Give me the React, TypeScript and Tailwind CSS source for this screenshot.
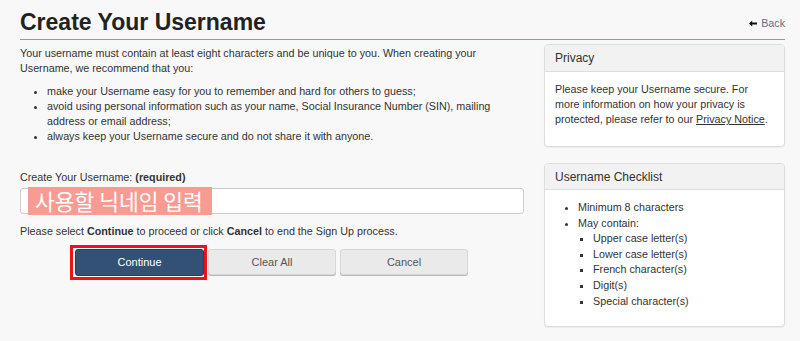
import React from "react";

export default function App() {
  return (
    <div
      className="w-[800px] h-[341px] bg-[#f8f8f8] text-[#333] overflow-hidden"
      style={{ fontFamily: '"Liberation Sans", Arial, sans-serif' }}
    >
      <div className="pl-[20px] pr-[15px]">
        <div className="flex items-end justify-between border-b border-[#c2898c]">
          <h1 className="mt-[9px] pb-[4px] text-[23px] leading-[26px] font-bold text-[#222]">
            Create Your Username
          </h1>
          <a className="flex items-center gap-[4px] mb-[9px] text-[10.7px] leading-[14px] text-[#5d7087]">
            <svg width="8" height="7" viewBox="0 0 9 7">
              <path d="M0 3.5 L3.6 0 L3.6 2.4 L9 2.4 L9 4.6 L3.6 4.6 L3.6 7 Z" fill="#111" />
            </svg>
            Back
          </a>
        </div>

        <div className="flex gap-[20px] mt-[5px]">
          <div className="w-[504px] text-[10.75px] leading-[15px]">
            <p className="pt-[1px]">
              Your username must contain at least eight characters and be unique to you. When creating your
              Username, we recommend that you:
            </p>
            <ul className="list-disc pl-[27px] mt-[8px]">
              <li>make your Username easy for you to remember and hard for others to guess;</li>
              <li>
                avoid using personal information such as your name, Social Insurance Number (SIN), mailing
                address or email address;
              </li>
              <li>always keep your Username secure and do not share it with anyone.</li>
            </ul>

            <div className="mt-[26px]">
              Create Your Username: <b>(required)</b>
            </div>
            <div className="relative mt-[3px]">
              <div className="h-[26px] w-full bg-white border border-[#ccc] rounded-[3px]" />
              <div
                className="absolute left-[8px] top-[-1px] w-[184px] h-[28px] bg-[#f89c93] text-white text-[21.5px] leading-[28px] pl-[7px]"
                style={{ fontFamily: '"Noto Sans CJK KR", "Noto Sans", sans-serif' }}
              >
                사용할 닉네임 입력
              </div>
            </div>

            <p className="mt-[10px]">
              Please select <b>Continue</b> to proceed or click <b>Cancel</b> to end the Sign Up process.
            </p>

            <div className="flex gap-[4px] ml-[55px] mt-[10px]">
              <div className="relative">
                <button className="w-[129px] h-[27px] bg-[#335075] text-white text-[11px] rounded-[3px] border border-[#24405f]">
                  Continue
                </button>
                <span className="absolute left-[-5px] top-[-4px] w-[137px] h-[35px] border-[3px] border-[#e8141c]" />
              </div>
              <button className="w-[128px] h-[26px] bg-[#eaeaea] text-[#555] text-[11px] rounded-[3px] border border-[#d6d6d6] shadow-[0_1px_0_#b8b8b8]">
                Clear All
              </button>
              <button className="w-[128px] h-[26px] bg-[#eaeaea] text-[#555] text-[11px] rounded-[3px] border border-[#d6d6d6] shadow-[0_1px_0_#b8b8b8]">
                Cancel
              </button>
            </div>
          </div>

          <div className="w-[241px] flex flex-col gap-[16px] -mt-[1px]">
            <div className="bg-white border border-[#ddd] rounded-[4px] shadow-[0_1px_1px_rgba(0,0,0,0.05)]">
              <div className="h-[27px] bg-[#f2f2f2] border-b border-[#ddd] rounded-t-[4px] px-[10px] text-[12px] leading-[27px]">
                Privacy
              </div>
              <div className="pl-[10px] pr-[14px] pt-[10px] pb-[19px] text-[10.75px] leading-[15px]">
                Please keep your Username secure. For more information on how your privacy is protected,
                please refer to our <a className="underline">Privacy Notice</a>.
              </div>
            </div>

            <div className="bg-white border border-[#ddd] rounded-[4px] shadow-[0_1px_1px_rgba(0,0,0,0.05)]">
              <div className="h-[26px] bg-[#f2f2f2] border-b border-[#ddd] rounded-t-[4px] px-[10px] text-[12px] leading-[26px]">
                Username Checklist
              </div>
              <div className="px-[10px] pt-[10px] pb-[17px] text-[10.75px] leading-[15.6px]">
                <ul className="list-disc pl-[23px]">
                  <li>Minimum 8 characters</li>
                  <li>
                    May contain:
                    <ul className="list-[square] pl-[15px]">
                      <li>Upper case letter(s)</li>
                      <li>Lower case letter(s)</li>
                      <li>French character(s)</li>
                      <li>Digit(s)</li>
                      <li>Special character(s)</li>
                    </ul>
                  </li>
                </ul>
              </div>
            </div>
          </div>
        </div>
      </div>
    </div>
  );
}
